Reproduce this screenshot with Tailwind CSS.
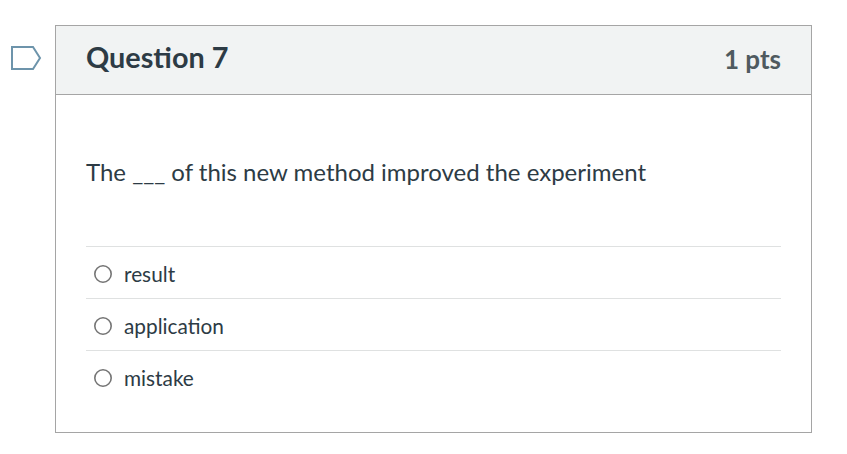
<!DOCTYPE html>
<html>
<head>
<meta charset="utf-8">
<script src="https://cdn.jsdelivr.net/npm/@tailwindcss/browser@4"></script>
</head>
<body class="bg-white font-['Lato',sans-serif] text-[#2d3b45]">
<div class="relative w-[847px] h-[454px] pt-[25px] pl-[55px] overflow-hidden">
  <svg class="absolute left-[10px] top-[45px]" width="32" height="26" viewBox="0 0 32 26" fill="none">
    <path d="M2 2H23L30 13L23 24H2Z" stroke="#6d94ab" stroke-width="2" stroke-linejoin="miter"/>
  </svg>
  <section class="w-[757px] h-[408px] border border-[#a5a5a5] flex flex-col">
    <header class="h-[69px] shrink-0 bg-[#f1f3f3] border-b border-[#a5a5a5] pl-[30px] pr-[30px] pb-[6px] flex items-center justify-between">
      <h2 class="text-[28.8px] font-bold leading-none">Question 7</h2>
      <div class="text-[26px] font-bold leading-none text-[#4f5a5f] pt-[3px]">1 pts</div>
    </header>
    <div class="px-[30px] flex-1 flex flex-col">
      <p class="mt-[61px] text-[24px] leading-[32px]">The ___ of this new method improved the experiment</p>
      <ul class="mt-[58px]">
        <li class="h-[52px] pt-[2px] border-t border-[#dfe1e1] flex items-center gap-[12px] pl-[8px] text-[20.8px]">
          <svg width="18" height="18" viewBox="0 0 18 18" fill="none"><circle cx="9" cy="9" r="8.2" stroke="#757575" stroke-width="1.6"/></svg><span>result</span>
        </li>
        <li class="h-[52px] pt-[2px] border-t border-[#dfe1e1] flex items-center gap-[12px] pl-[8px] text-[20.8px]">
          <svg width="18" height="18" viewBox="0 0 18 18" fill="none"><circle cx="9" cy="9" r="8.2" stroke="#757575" stroke-width="1.6"/></svg><span>application</span>
        </li>
        <li class="h-[52px] pt-[2px] border-t border-[#dfe1e1] flex items-center gap-[12px] pl-[8px] text-[20.8px]">
          <svg width="18" height="18" viewBox="0 0 18 18" fill="none"><circle cx="9" cy="9" r="8.2" stroke="#757575" stroke-width="1.6"/></svg><span>mistake</span>
        </li>
      </ul>
    </div>
  </section>
</div>
</body>
</html>
